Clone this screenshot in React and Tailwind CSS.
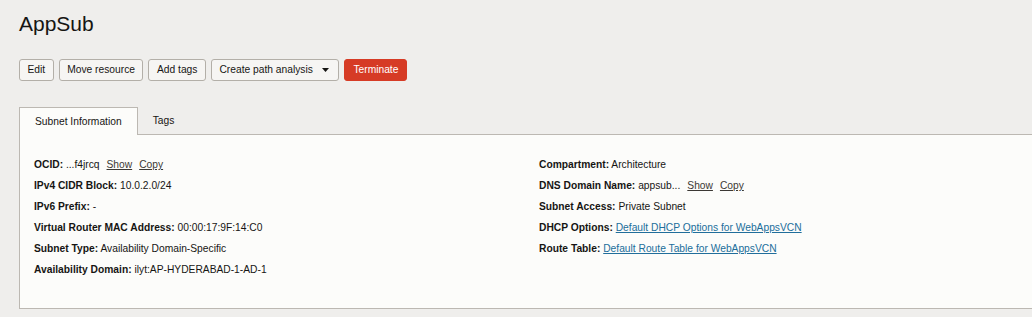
import React from 'react';

const Btn = ({ children, danger }) => (
  <button
    className={
      danger
        ? 'h-[22px] px-[8px] rounded-[3px] bg-[#d63b25] border border-[#d63b25] text-white text-[10.25px] leading-none'
        : 'h-[22px] px-[7.5px] rounded-[3px] bg-[#f6f5f3] border border-[#b3afa8] text-[#161513] text-[10.25px] leading-none flex items-center'
    }
  >
    {children}
  </button>
);

const Row = ({ label, children }) => (
  <div className="leading-[21px] whitespace-nowrap">
    <span className="font-bold">{label}:</span> {children}
  </div>
);

const SmallLink = ({ children }) => (
  <a className="ml-[7px] text-[#3b3834] underline cursor-pointer">{children}</a>
);

const BlueLink = ({ children }) => (
  <a className="text-[#216e9b] underline cursor-pointer">{children}</a>
);

export default function App() {
  return (
    <div className="w-[1032px] min-h-[317px] bg-[#efeeec] font-['Liberation_Sans',Arial,sans-serif] text-[#161513] pl-[19px] pt-[12px] pb-[9px]">
      {/* Title */}
      <h1 className="text-[21px] leading-[24px] font-normal">AppSub</h1>

      {/* Actions */}
      <div className="mt-[23px] flex gap-[5px]">
        <Btn>Edit</Btn>
        <Btn>Move resource</Btn>
        <Btn>Add tags</Btn>
        <Btn>
          Create path analysis
          <svg className="ml-[9px] mr-[2px]" width="7" height="4" viewBox="0 0 7 4">
            <path d="M0 0h7L3.5 4z" fill="#161513" />
          </svg>
        </Btn>
        <Btn danger>Terminate</Btn>
      </div>

      {/* Tabs */}
      <div className="mt-[26px] flex text-[10.25px]">
        <div className="relative z-10 -mb-px h-[28px] px-[15px] flex items-center bg-[#fcfcfa] border border-b-0 border-[#bcb8b2]">
          Subnet Information
        </div>
        <div className="h-[27px] px-[15px] flex items-center">Tags</div>
      </div>

      {/* Panel */}
      <div className="h-[175px] bg-[#fcfcfa] border-l border-t border-b border-[#bcb8b2] pl-[14px] pt-[19px] text-[10.25px] grid grid-cols-[505px_1fr]">
        <div>
          <Row label="OCID">
            ...f4jrcq<SmallLink>Show</SmallLink>
            <SmallLink>Copy</SmallLink>
          </Row>
          <Row label="IPv4 CIDR Block">10.0.2.0/24</Row>
          <Row label="IPv6 Prefix">-</Row>
          <Row label="Virtual Router MAC Address">00:00:17:9F:14:C0</Row>
          <Row label="Subnet Type">Availability Domain-Specific</Row>
          <Row label="Availability Domain">ilyt:AP-HYDERABAD-1-AD-1</Row>
        </div>
        <div>
          <Row label="Compartment">Architecture</Row>
          <Row label="DNS Domain Name">
            appsub...<SmallLink>Show</SmallLink>
            <SmallLink>Copy</SmallLink>
          </Row>
          <Row label="Subnet Access">Private Subnet</Row>
          <Row label="DHCP Options">
            <BlueLink>Default DHCP Options for WebAppsVCN</BlueLink>
          </Row>
          <Row label="Route Table">
            <BlueLink>Default Route Table for WebAppsVCN</BlueLink>
          </Row>
        </div>
      </div>
    </div>
  );
}
